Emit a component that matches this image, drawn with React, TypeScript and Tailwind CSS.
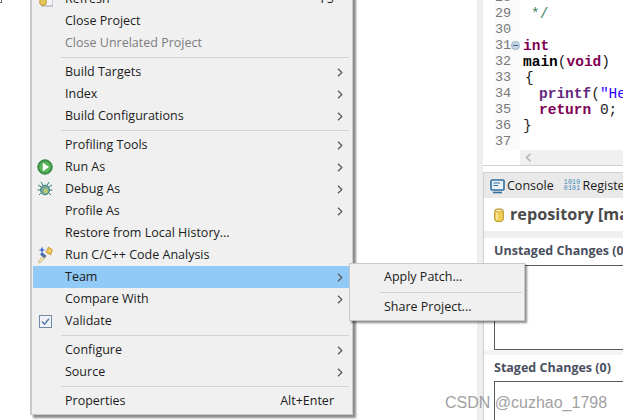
import React from "react";

type MenuEntry =
  | { sep: true }
  | { label: string; arrow?: boolean; disabled?: boolean; active?: boolean; shortcut?: string; icon?: React.ReactNode };

function Chevron({ className = "" }: { className?: string }) {
  return (
    <svg width="6" height="9" viewBox="0 0 6 9" className={className}>
      <path d="M1 0.8 L4.8 4.5 L1 8.2" fill="none" stroke="#555" strokeWidth="1.2" />
    </svg>
  );
}

function RefreshIcon() {
  return (
    <svg width="16" height="16" viewBox="0 0 16 16">
      <rect x="5" y="1" width="11" height="14" fill="#f4f4f4" stroke="#9aa5b5" />
      <circle cx="6" cy="11" r="3.4" fill="#e9c65a" stroke="#c09a30" />
    </svg>
  );
}

function RunIcon() {
  return (
    <svg width="16" height="16" viewBox="0 0 16 16">
      <circle cx="8" cy="8" r="7.2" fill="#3f9a48" stroke="#2c7d3b" />
      <circle cx="8" cy="8" r="5.6" fill="#59b55c" />
      <path d="M5.8 3.8 L12 8 L5.8 12.2 Z" fill="#ffffff" />
    </svg>
  );
}

function DebugIcon() {
  return (
    <svg width="16" height="16" viewBox="0 0 16 16">
      <g stroke="#2f7f76" strokeWidth="1">
        <path d="M1 4 L5 6.5 M0.5 9 L4 9 M2 14 L5 11 M15 4 L11 6.5 M15.5 9 L12 9 M14 14 L11 11 M4 1 L6 4.5 M12 1 L10 4.5" />
      </g>
      <ellipse cx="8" cy="9" rx="4.4" ry="4.8" fill="#7fa89c" stroke="#2f7f76" />
      <ellipse cx="8.8" cy="10" rx="2.2" ry="2.4" fill="#b7cf6e" />
    </svg>
  );
}

function AnalysisIcon() {
  return (
    <svg width="18" height="18" viewBox="0 0 18 18">
      <path d="M2 16 L8 9 L10 11 L4 17 Z" fill="#f5e6b0" stroke="#b09a5a" strokeWidth="0.6" />
      <path d="M6 6 L10.5 10 L8 12 L4 8.5 Z" fill="#4f6ea8" />
      <path d="M12.5 1 L16.5 4 L14.5 9 L10 6 Z" fill="#f0c050" stroke="#b98a20" strokeWidth="0.7" />
      <path d="M13 4 L14.8 5.4" stroke="#fff4c8" strokeWidth="1" />
      <path d="M6 0.5 L7 3.2 L9.5 4 L7 4.8 L6 7 L5 4.8 L2.5 4 L5 3.2 Z" fill="#3f66c8" />
    </svg>
  );
}

function CheckIcon() {
  return (
    <svg width="13" height="13" viewBox="0 0 13 13">
      <rect x="0.5" y="0.5" width="12" height="12" fill="#eef2f7" stroke="#7389a6" />
      <path d="M3 6.5 L5.5 9.2 L10 3.8" fill="none" stroke="#5b7aa0" strokeWidth="1.5" />
    </svg>
  );
}

function ConsoleIcon() {
  return (
    <svg width="15" height="15" viewBox="0 0 15 15" className="shrink-0">
      <rect x="1" y="1" width="13" height="10" rx="1" fill="#eaf2fa" stroke="#2f6f9f" strokeWidth="1.6" />
      <path d="M3.5 4 H10 M3.5 6.5 H8" stroke="#2f6f9f" />
      <path d="M3 13.5 H12" stroke="#2f6f9f" strokeWidth="1.6" />
    </svg>
  );
}

function RepoIcon() {
  return (
    <svg width="10" height="14" viewBox="0 0 10 14" className="shrink-0">
      <rect x="0.7" y="1" width="8.6" height="12.4" rx="2.5" fill="#f2cd55" stroke="#b39028" />
      <ellipse cx="5" cy="2.6" rx="3.4" ry="1.4" fill="#fbeeb0" stroke="#b39028" strokeWidth="0.6" />
      <path d="M3 4.5 V12" stroke="#fdf3c0" strokeWidth="1.2" />
    </svg>
  );
}

const entries: MenuEntry[] = [
  { label: "Refresh", shortcut: "F5", icon: <RefreshIcon /> },
  { label: "Close Project" },
  { label: "Close Unrelated Project", disabled: true },
  { sep: true },
  { label: "Build Targets", arrow: true },
  { label: "Index", arrow: true },
  { label: "Build Configurations", arrow: true },
  { sep: true },
  { label: "Profiling Tools", arrow: true },
  { label: "Run As", arrow: true, icon: <RunIcon /> },
  { label: "Debug As", arrow: true, icon: <DebugIcon /> },
  { label: "Profile As", arrow: true },
  { label: "Restore from Local History..." },
  { label: "Run C/C++ Code Analysis", icon: <AnalysisIcon /> },
  { label: "Team", arrow: true, active: true },
  { label: "Compare With", arrow: true },
  { label: "Validate", icon: <CheckIcon /> },
  { sep: true },
  { label: "Configure", arrow: true },
  { label: "Source", arrow: true },
  { sep: true },
  { label: "Properties", shortcut: "Alt+Enter" },
];

function MenuRow({ entry }: { entry: MenuEntry }) {
  if ("sep" in entry) {
    return (
      <div className="h-[7px] pl-[28px] flex items-center">
        <div className="h-px w-full bg-[#d2d2d2]" />
      </div>
    );
  }
  return (
    <div className={`h-[22px] flex items-center ${entry.active ? "bg-[#91c9f7]" : ""}`}>
      <div className="w-[32px] shrink-0 flex items-center justify-center pr-[8px]">{entry.icon}</div>
      <span className={`flex-1 ${entry.disabled ? "text-[#7d7d7d]" : "text-[#1c1c1c]"}`}>{entry.label}</span>
      {entry.shortcut && <span className="mr-[15px] text-[#1c1c1c]">{entry.shortcut}</span>}
      {entry.arrow && <Chevron className="mr-[6px]" />}
    </div>
  );
}

const codeLines: { n: number; code: React.ReactNode }[] = [
  { n: 28, code: "" },
  { n: 29, code: <span className="ml-[8px] text-[#3f7f5f]">*/</span> },
  { n: 30, code: "" },
  { n: 31, code: <b className="text-[#7f0055]">int</b> },
  {
    n: 32,
    code: (
      <>
        <b className="text-black">main</b>(<b className="text-[#7f0055]">void</b>)
      </>
    ),
  },
  { n: 33, code: <span className="ml-[2px]">{"{"}</span> },
  {
    n: 34,
    code: (
      <span className="ml-[16px]">
        <b className="text-[#642880]">printf</b>(<span className="text-[#2a00ff]">"Hello</span>
      </span>
    ),
  },
  {
    n: 35,
    code: (
      <span className="ml-[16px]">
        <b className="text-[#7f0055]">return</b> 0;
      </span>
    ),
  },
  { n: 36, code: "}" },
  { n: 37, code: "" },
];

function Editor() {
  return (
    <div className="h-[166px] shrink-0 border-b border-[#d0d0d0] flex flex-col overflow-hidden">
      <div className="flex-1 flex overflow-hidden font-['Liberation_Mono',monospace] text-[14.5px] leading-[16px] text-[#222]">
        <div className="w-[12px] shrink-0" />
        <div className="w-[25px] shrink-0 -mt-[10px] bg-[#fafafa] text-[#787878] text-[13.5px] self-start">
          {codeLines.map((l) => (
            <div key={l.n} className="h-[16px] relative">
              {l.n}
              {l.n === 31 && (
                <span className="absolute left-[16px] top-[3px] w-[9px] h-[9px] rounded-full bg-[#c3d4e6] border border-[#9ab0c8] flex items-center justify-center">
                  <span className="w-[5px] h-px bg-[#44607d]" />
                </span>
              )}
            </div>
          ))}
        </div>
        <div className="flex-1 -mt-[10px] pl-[3px] whitespace-pre overflow-hidden">
          {codeLines.map((l) => (
            <div key={l.n} className="h-[16px]">
              {l.code}
            </div>
          ))}
        </div>
      </div>
      <div className="h-[15px] shrink-0 ml-[37px] bg-[#f0f0f0] flex items-center pl-[5px]">
        <svg width="7" height="9" viewBox="0 0 7 9">
          <path d="M5.5 0.8 L1.5 4.5 L5.5 8.2" fill="none" stroke="#b5b5b5" strokeWidth="1.6" />
        </svg>
      </div>
    </div>
  );
}

function GitPanel() {
  return (
    <div className="flex-1 mt-[6px] border-l border-t border-[#cfcfcf] flex flex-col overflow-hidden">
      <div className="h-[25px] shrink-0 bg-[#e9e9e9] flex items-center pl-[6px] pt-px text-[12.5px] text-[#1c1c1c] whitespace-nowrap">
        <ConsoleIcon />
        <span className="ml-[2px]">Console</span>
        <span className="ml-[10px] font-['Liberation_Mono',monospace] text-[6.5px] leading-[6.5px] tracking-[0.3px] text-[#3f86b8]">
          1010
          <br />
          0101
        </span>
        <span className="ml-[2px]">Registers</span>
      </div>
      <div className="h-[33px] shrink-0 flex items-center pl-[10px] whitespace-nowrap">
        <RepoIcon />
        <span className="ml-[6px] text-[16.2px] font-bold text-[#4a4a4a]">repository [master]</span>
      </div>
      <div className="h-[7px] shrink-0 bg-[#f0f0f0]" />
      <div className="h-[27px] shrink-0 pl-[10px] flex items-center text-[12.5px] font-bold text-[#4a5060] whitespace-nowrap">
        Unstaged Changes (0)
      </div>
      <div className="h-[85px] shrink-0 ml-[10px] border-l border-t border-b border-[#5a5a5a] bg-white" />
      <div className="h-[5px] shrink-0 bg-[#f4f4f4]" />
      <div className="h-[26px] shrink-0 pl-[10px] flex items-center text-[12.5px] font-bold text-[#4a5060] whitespace-nowrap">
        Staged Changes (0)
      </div>
      <div className="flex-1 ml-[10px] border-l border-t border-[#5a5a5a] bg-white" />
    </div>
  );
}

export default function App() {
  return (
    <div className="relative w-[623px] h-[420px] overflow-hidden bg-white flex font-['Open_Sans',sans-serif] text-[12.5px]">
      <div className="w-[30px] shrink-0">
        <div className="w-[2px] h-[3px] border-r border-b border-[#666]" />
      </div>

      {/* Context menu */}
      <div className="w-[323px] shrink-0 self-start -mt-[16px] z-10 bg-[#f0f0f0] border-2 border-r border-b border-[#c8c8c8] py-[2px] pr-[3px] shadow-[3px_3px_2px_rgba(0,0,0,0.45)]">
        <div className="pl-px">
          {entries.map((entry, i) => (
            <MenuRow key={i} entry={entry} />
          ))}
        </div>
      </div>

      <div className="flex-1" />
      <div className="w-[6px] shrink-0 bg-[#eeeeee]" />

      <div className="w-[140px] shrink-0 flex flex-col overflow-hidden">
        <Editor />
        <GitPanel />
      </div>

      {/* Team submenu */}
      <div className="absolute left-[349px] top-[263px] w-[176px] z-20 bg-[#f0f0f0] border border-[#c8c8c8] shadow-[2px_2px_2px_rgba(0,0,0,0.45)] pr-[2px]">
        <div className="h-[26px] pl-[34px] flex items-center text-[#1c1c1c]">Apply Patch...</div>
        <div className="h-[4px] pl-[30px] flex items-center">
          <div className="h-px w-full bg-[#d2d2d2]" />
        </div>
        <div className="h-[26px] pl-[34px] flex items-center text-[#1c1c1c]">Share Project...</div>
      </div>

      {/* Watermark */}
      <div className="absolute left-[445px] top-[392px] z-30 text-[16px] leading-[22px] text-[#8a8a8a] opacity-80 font-['Liberation_Sans',sans-serif] whitespace-nowrap">
        CSDN @cuzhao_1798
      </div>
    </div>
  );
}
